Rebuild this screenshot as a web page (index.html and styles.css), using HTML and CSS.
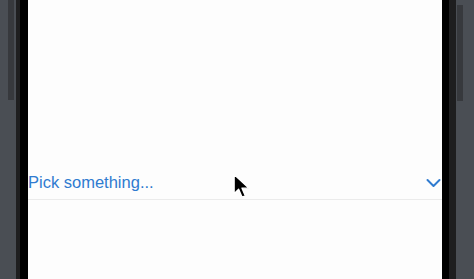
FILE: index.html
```html
<!DOCTYPE html>
<html>
<head>
<meta charset="utf-8">
<link rel="stylesheet" href="styles.css">
</head>
<body>
<div class="desk">
  <div class="gutter gutter-left"><div class="scroll"></div></div>
  <div class="bezel bezel-left"></div>
  <div class="screen">
    <div class="spacer"></div>
    <div class="picker">
      <span class="picker-label">Pick something...</span>
      <svg class="chevron" width="15" height="10" viewBox="0 0 15 10">
        <path d="M1.5 2 L7.5 8 L13.5 2" fill="none" stroke="#2f7bd0" stroke-width="2" stroke-linecap="round" stroke-linejoin="round"/>
      </svg>
    </div>
    <svg class="cursor" width="18" height="28" viewBox="0 0 16 24">
      <path d="M1 1 L1 18 L5 14 L8 21 L11 20 L8 13 L14 13 Z" fill="#000" stroke="#fff" stroke-width="1.2" stroke-linejoin="round"/>
    </svg>
  </div>
  <div class="bezel bezel-right"></div>
  <div class="gutter gutter-right"><div class="scroll"></div></div>
</div>
</body>
</html>
```

FILE: styles.css
```css
html, body {
  margin: 0;
  padding: 0;
  height: 100%;
  background: #4a4e54;
}
.desk {
  display: flex;
  height: 279px;
  width: 474px;
}
.gutter {
  background: #4a4e54;
  display: flex;
}
.gutter-left {
  width: 16px;
  justify-content: flex-end;
  padding-right: 2px;
  box-sizing: border-box;
}
.gutter-right {
  width: 18px;
  padding-left: 1px;
  box-sizing: border-box;
}
.scroll {
  width: 6px;
  height: 100px;
  background: #37393d;
}
.gutter-right .scroll {
  margin-top: 5px;
  height: 96px;
}
.bezel-left {
  width: 12px;
  background: linear-gradient(to right, #1f1f20 0, #1f1f20 4px, #000 4px);
}
.bezel-right {
  width: 14px;
  background: linear-gradient(to right, #000 0, #000 7px, #1e1e1f 7px);
}
.screen {
  flex: 1;
  background: #fdfdfd;
  display: flex;
  flex-direction: column;
  position: relative;
}
.spacer {
  height: 166px;
}
.picker {
  height: 33px;
  display: flex;
  align-items: center;
  justify-content: space-between;
  border-bottom: 1px solid #ebebeb;
  padding-right: 1px;
}
.picker-label {
  font-family: "Liberation Sans", Arial, sans-serif;
  font-size: 16.5px;
  color: #2f7bd0;
  margin-top: -1px;
}
.chevron {
  display: block;
}
.cursor {
  position: absolute;
  left: 205px;
  top: 173px;
}
```
